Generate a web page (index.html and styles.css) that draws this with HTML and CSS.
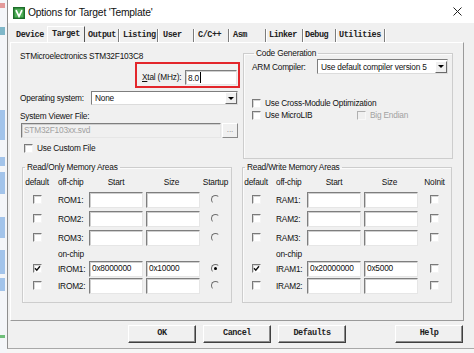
FILE: index.html
```html
<!DOCTYPE html>
<html>
<head>
<meta charset="utf-8">
<title>Options for Target 'Template'</title>
<link rel="stylesheet" href="styles.css">
</head>
<body>
<div class="screen">
  <div class="side">
    <div class="mark red m1"></div>
    <div class="mark teal m2"></div>
    <div class="mark m3"></div>
    <div class="mark m4"></div>
    <div class="mark m5"></div>
    <div class="mark m6"></div>
    <div class="mark m7"></div>
    <div class="mark m8"></div>
    <div class="mark green m9"></div>
  </div>
  <div class="window">
    <div class="titlebar">
      <svg class="app-icon" viewBox="0 0 12 12" width="12" height="12">
        <rect width="12" height="12" fill="#1d6e2a"/>
        <rect x="1.5" y="1.5" width="9" height="9" fill="#4fae57"/>
        <path d="M3 3.2 L6 9.4 L9 3.2" stroke="#fff" stroke-width="1.7" fill="none"/>
      </svg>
      <span class="title">Options for Target 'Template'</span>
      <svg class="close" viewBox="0 0 9 9" width="9" height="9">
        <path d="M0.5 0.5 L8.5 8.5 M8.5 0.5 L0.5 8.5" stroke="#222" stroke-width="1"/>
      </svg>
    </div>
    <div class="tabs">
      <span class="tab t-device">Device</span>
      <span class="tab active t-target">Target</span>
      <span class="tab t-output">Output</span>
      <span class="tab t-listing">Listing</span>
      <span class="tab t-user">User</span>
      <span class="tab t-cc">C/C++</span>
      <span class="tab t-asm">Asm</span>
      <span class="tab t-linker">Linker</span>
      <span class="tab t-debug">Debug</span>
      <span class="tab t-util">Utilities</span>
    </div>
    <div class="panel">
      <div class="top">
        <div class="left-col">
          <div class="device-name">STMicroelectronics STM32F103C8</div>
          <div class="xtal-box">
            <span class="xtal-label"><u>X</u>tal (MHz):</span>
            <div class="field xtal-input">8.0<span class="caret"></span></div>
          </div>
          <div class="os-row">
            <span class="os-label">Operating system:</span>
            <div class="combo os-combo"><span class="combo-text">None</span><span class="drop"><span class="tri"></span></span></div>
          </div>
          <div class="svf-label">System Viewer File:</div>
          <div class="svf-row">
            <div class="field disabled svf-input">STM32F103xx.svd</div>
            <div class="browse">...</div>
          </div>
          <div class="check-row custom"><span class="cb"></span><span class="cb-text">Use Custom File</span></div>
        </div>
        <fieldset class="group codegen">
          <legend>Code Generation</legend>
          <div class="arm-row">
            <span class="arm-label">ARM Compiler:</span>
            <div class="combo arm-combo"><span class="combo-text">Use default compiler version 5</span><span class="drop"><span class="tri"></span></span></div>
          </div>
          <div class="check-row cmo"><span class="cb"></span><span class="cb-text">Use Cross-Module Optimization</span></div>
          <div class="check-row micro">
            <span class="micro-item"><span class="cb"></span><span class="cb-text">Use MicroLIB</span></span>
            <span class="endian-item"><span class="cb dis"></span><span class="cb-text gray">Big Endian</span></span>
          </div>
        </fieldset>
      </div>
      <div class="mem">
        <fieldset class="group memgroup">
          <legend>Read/Only Memory Areas</legend>
          <div class="mem-grid rom-grid">
            <span class="hd">default</span><span class="hd lbl">off-chip</span><span class="hd">Start</span><span class="hd">Size</span><span class="hd">Startup</span>

            <span class="cell"><span class="cb"></span></span><span class="lbl">ROM1:</span><span class="field mf"></span><span class="size-cell"><span class="field mf"></span></span><span class="cell"><span class="radio"></span></span>

            <span class="cell"><span class="cb"></span></span><span class="lbl">ROM2:</span><span class="field mf"></span><span class="size-cell"><span class="field mf"></span></span><span class="cell"><span class="radio"></span></span>

            <span class="cell"><span class="cb"></span></span><span class="lbl">ROM3:</span><span class="field mf"></span><span class="size-cell"><span class="field mf"></span></span><span class="cell"><span class="radio"></span></span>

            <span class="lbl onchip">on-chip</span>

            <span class="cell"><span class="cb on"><svg viewBox="0 0 7 7" width="7" height="7"><path d="M1 3.2 L2.8 5.2 L6 1.2" stroke="#111" stroke-width="1.4" fill="none"/></svg></span></span><span class="lbl">IROM1:</span><span class="field mf">0x8000000</span><span class="size-cell"><span class="field mf">0x10000</span></span><span class="cell"><span class="radio sel"></span></span>

            <span class="cell"><span class="cb"></span></span><span class="lbl">IROM2:</span><span class="field mf"></span><span class="size-cell"><span class="field mf"></span></span><span class="cell"><span class="radio"></span></span>
          </div>
        </fieldset>
        <fieldset class="group memgroup">
          <legend>Read/Write Memory Areas</legend>
          <div class="mem-grid ram-grid">
            <span class="hd">default</span><span class="hd lbl">off-chip</span><span class="hd">Start</span><span class="hd">Size</span><span class="hd">NoInit</span>

            <span class="cell"><span class="cb"></span></span><span class="lbl">RAM1:</span><span class="field mf"></span><span class="size-cell"><span class="field mf"></span></span><span class="cell"><span class="cb"></span></span>

            <span class="cell"><span class="cb"></span></span><span class="lbl">RAM2:</span><span class="field mf"></span><span class="size-cell"><span class="field mf"></span></span><span class="cell"><span class="cb"></span></span>

            <span class="cell"><span class="cb"></span></span><span class="lbl">RAM3:</span><span class="field mf"></span><span class="size-cell"><span class="field mf"></span></span><span class="cell"><span class="cb"></span></span>

            <span class="lbl onchip">on-chip</span>

            <span class="cell"><span class="cb on"><svg viewBox="0 0 7 7" width="7" height="7"><path d="M1 3.2 L2.8 5.2 L6 1.2" stroke="#111" stroke-width="1.4" fill="none"/></svg></span></span><span class="lbl">IRAM1:</span><span class="field mf">0x20000000</span><span class="size-cell"><span class="field mf">0x5000</span></span><span class="cell"><span class="cb"></span></span>

            <span class="cell"><span class="cb"></span></span><span class="lbl">IRAM2:</span><span class="field mf"></span><span class="size-cell"><span class="field mf"></span></span><span class="cell"><span class="cb"></span></span>
          </div>
        </fieldset>
      </div>
    </div>
    <div class="buttons">
      <span class="btn b-ok">OK</span>
      <span class="btn b-cancel">Cancel</span>
      <span class="btn b-defaults">Defaults</span>
      <span class="btn b-help">Help</span>
    </div>
  </div>
</div>
</body>
</html>
```

FILE: styles.css
```css
* { box-sizing: border-box; }
html, body { margin: 0; padding: 0; }
body {
  width: 474px;
  height: 353px;
  overflow: hidden;
  background: #f6f6f6;
  font-family: "Liberation Sans", Arial, sans-serif;
  font-size: 8.3px;
  letter-spacing: -0.2px;
  color: #111;
}
.screen { display: flex; height: 353px; }

/* strip of the window behind */
.side { width: 7px; flex: none; background: #f4f6f9; display: flex; flex-direction: column; }
.mark { flex: none; width: 5px; background: #a3c4ea; }
.mark.red { background: #e39a9a; }
.mark.teal { background: #7fb7c9; }
.mark.green { background: #6fbf7a; }
.m1 { margin-top: 3px; height: 5px; }
.m2 { margin-top: 19px; height: 8px; }
.m3 { margin-top: 75px; height: 30px; }
.m4 { margin-top: 17px; height: 9px; }
.m5 { margin-top: 6px; height: 22px; }
.m6 { margin-top: 23px; height: 21px; }
.m7 { margin-top: 12px; height: 24px; }
.m8 { margin-top: 4px; height: 13px; }
.m9 { margin-top: 44px; height: 3px; }

.window {
  flex: 1;
  height: 349px;
  background: #f0f0f0;
  border-left: 1px solid #8e8e8e;
  border-bottom: 1px solid #a8a8a8;
  display: flex;
  flex-direction: column;
}

.titlebar {
  flex: none;
  height: 23px;
  background: #fff;
  display: flex;
  align-items: center;
  padding-left: 5px;
}
.app-icon { flex: none; margin-top: 2px; }
.title { font-size: 10.3px; margin-left: 3px; margin-top: 1px; color: #111; }
.close { flex: none; margin-left: auto; margin-right: 12px; }

/* tabs */
.tabs {
  flex: none;
  height: 19px;
  display: flex;
  align-items: flex-end;
  padding-left: 4px;
  font-family: "Liberation Mono", "DejaVu Sans Mono", monospace;
  font-weight: bold;
  font-size: 8.5px;
  letter-spacing: -0.45px;
  color: #222;
}
.tab {
  flex: none;
  height: 13px;
  line-height: 13px;
  padding-left: 3px;
  border-right: 1px solid #7c7c7c;
  box-shadow: 1px 0 0 #fff;
  white-space: nowrap;
}
.tab.active {
  height: 16px;
  line-height: 14px;
  padding-left: 4px;
  border-left: 1px solid #fff;
  border-top: 1px solid #fff;
  border-right: 1px solid #555;
  box-shadow: none;
}
.t-device { width: 35px; border-right: none; box-shadow: none; padding-left: 4px; }
.t-target { width: 38px; }
.t-output { width: 34px; }
.t-listing { width: 39px; padding-left: 4px; }
.t-user { width: 36px; padding-left: 5px; }
.t-cc { width: 35px; padding-left: 4px; }
.t-asm { width: 37px; padding-left: 4px; }
.t-linker { width: 37px; }
.t-debug { width: 33px; padding-left: 2px; }
.t-util { width: 49px; }

/* main panel */
.panel {
  flex: none;
  margin-left: 2px;
  width: 454px;
  height: 279px;
  border: 1px solid;
  border-color: #fff #9a9a9a #9a9a9a #fff;
  display: flex;
  flex-direction: column;
}
.top {
  flex: none;
  height: 118px;
  display: grid;
  grid-template-columns: 229px 210px;
  column-gap: 3px;
  align-items: start;
}
.left-col { padding-left: 9px; display: flex; flex-direction: column; }
.device-name { margin-top: 8px; height: 11px; line-height: 11px; white-space: nowrap; }

.xtal-box {
  margin-left: 115px;
  width: 105px;
  height: 26px;
  border: 2px solid #e3262b;
  display: flex;
  align-items: flex-end;
  padding: 0 1px 1px 5px;
}
.xtal-label { line-height: 15px; white-space: nowrap; }
.xtal-input { margin-left: auto; width: 52px; height: 15px; padding-left: 2px; display: flex; align-items: center; }
.caret { width: 1px; height: 11px; background: #000; margin-left: 1px; }

.field {
  background: #fff;
  border: 1px solid;
  border-color: #7e7e7e #e6e6e6 #e6e6e6 #7e7e7e;
  box-shadow: inset 1px 1px 0 #cfcfcf;
  white-space: nowrap;
  overflow: hidden;
}
.field.disabled { background: #f0f0f0; color: #a0a0a0; }

.os-row { margin-top: 3px; height: 14px; display: flex; align-items: center; }
.os-label { width: 71px; flex: none; white-space: nowrap; }
.combo {
  height: 14px;
  background: #fff;
  border: 1px solid;
  border-color: #7e7e7e #dcdcdc #dcdcdc #7e7e7e;
  display: flex;
  align-items: center;
  padding-left: 3px;
}
.combo-text { flex: 1; white-space: nowrap; line-height: 12px; overflow: hidden; }
.drop {
  flex: none;
  width: 12px;
  height: 12px;
  background: #f0f0f0;
  border: 1px solid;
  border-color: #fff #6a6a6a #6a6a6a #fff;
  display: flex;
  align-items: center;
  justify-content: center;
}
.tri { width: 0; height: 0; border-left: 3px solid transparent; border-right: 3px solid transparent; border-top: 3px solid #000; }
.os-combo { width: 147px; }

.svf-label { margin-top: 5px; line-height: 12px; height: 12px; }
.svf-row { margin-top: 1px; height: 15px; display: flex; }
.svf-input { margin-left: 1px; width: 200px; height: 15px; padding-left: 2px; line-height: 13px; }
.browse {
  margin-left: 1px;
  width: 16px;
  height: 15px;
  border: 1px solid;
  border-color: #fff #8a8a8a #8a8a8a #fff;
  background: #f0f0f0;
  color: #9a9a9a;
  text-align: center;
  line-height: 11px;
}

.check-row { display: flex; align-items: center; height: 12px; white-space: nowrap; }
.cb {
  flex: none;
  width: 9px;
  height: 9px;
  background: #fff;
  border: 1px solid;
  border-color: #7a7a7a #f4f4f4 #f4f4f4 #7a7a7a;
  box-shadow: inset 1px 1px 0 #d6d6d6;
  display: flex;
  align-items: center;
  justify-content: center;
}
.cb.dis { background: #f0f0f0; border-color: #b0b0b0 #f8f8f8 #f8f8f8 #b0b0b0; box-shadow: none; }
.cb-text { margin-left: 4px; }
.gray { color: #a2a2a2; }
.custom { margin-top: 4px; margin-left: 4px; }

/* group boxes */
.group {
  margin: 0;
  padding: 0;
  min-width: 0;
  border: 1px solid #cdcdcd;
  box-shadow: inset 1px 1px 0 #fbfbfb;
}
.group legend {
  margin-left: 2px;
  padding: 0 2px;
  line-height: 12px;
  white-space: nowrap;
}
.codegen { margin-top: 4px; padding: 0 0 37px 8px; }
.arm-row { height: 15px; display: flex; align-items: center; }
.arm-label { width: 65px; flex: none; white-space: nowrap; }
.arm-combo { width: 131px; height: 15px; }
.cmo { margin-top: 23px; }
.micro-item { width: 105px; display: flex; align-items: center; }
.endian-item { display: flex; align-items: center; }

/* memory areas */
.mem {
  display: grid;
  grid-template-columns: 210px 210px;
  column-gap: 10px;
  padding-left: 11px;
}
.memgroup { padding: 0 0 8px 0; }
.mem-grid {
  display: grid;
  grid-template-rows: 17px 19px 19px 19px 13px 17px 17px;
  align-items: center;
  white-space: nowrap;
}
.rom-grid { grid-template-columns: 28px 38px 54px 57px 31px; }
.ram-grid { grid-template-columns: 26px 38px 54px 57px 33px; }
.hd { text-align: center; }
.hd.lbl { text-align: left; }
.lbl { padding-left: 7px; }
.onchip { grid-column: 2 / -1; }
.cell { display: flex; justify-content: center; align-items: center; }
.size-cell { display: flex; justify-content: flex-end; }
.mf { display: block; width: 54px; height: 16px; line-height: 13px; padding-left: 2px; }

.radio {
  width: 9px;
  height: 9px;
  border-radius: 50%;
  border: 1px solid;
  border-color: #6e6e6e #f0f0f0 #f0f0f0 #6e6e6e;
  display: flex;
  align-items: center;
  justify-content: center;
}
.radio.sel::after { content: ""; width: 3px; height: 3px; border-radius: 50%; background: #000; }

/* buttons */
.buttons {
  flex: none;
  margin-top: 4px;
  height: 18px;
  display: flex;
  padding-left: 120px;
  font-family: "Liberation Mono", "DejaVu Sans Mono", monospace;
  font-weight: bold;
  font-size: 8.5px;
  letter-spacing: -0.45px;
}
.btn {
  flex: none;
  width: 68px;
  height: 18px;
  line-height: 15px;
  text-align: center;
  background: #f0f0f0;
  border: 1px solid;
  border-color: #fff #404040 #404040 #fff;
  box-shadow: inset -1px -1px 0 #8a8a8a;
  color: #222;
}
.b-cancel, .b-defaults { margin-left: 7px; }
.b-help { margin-left: 49px; }
```
